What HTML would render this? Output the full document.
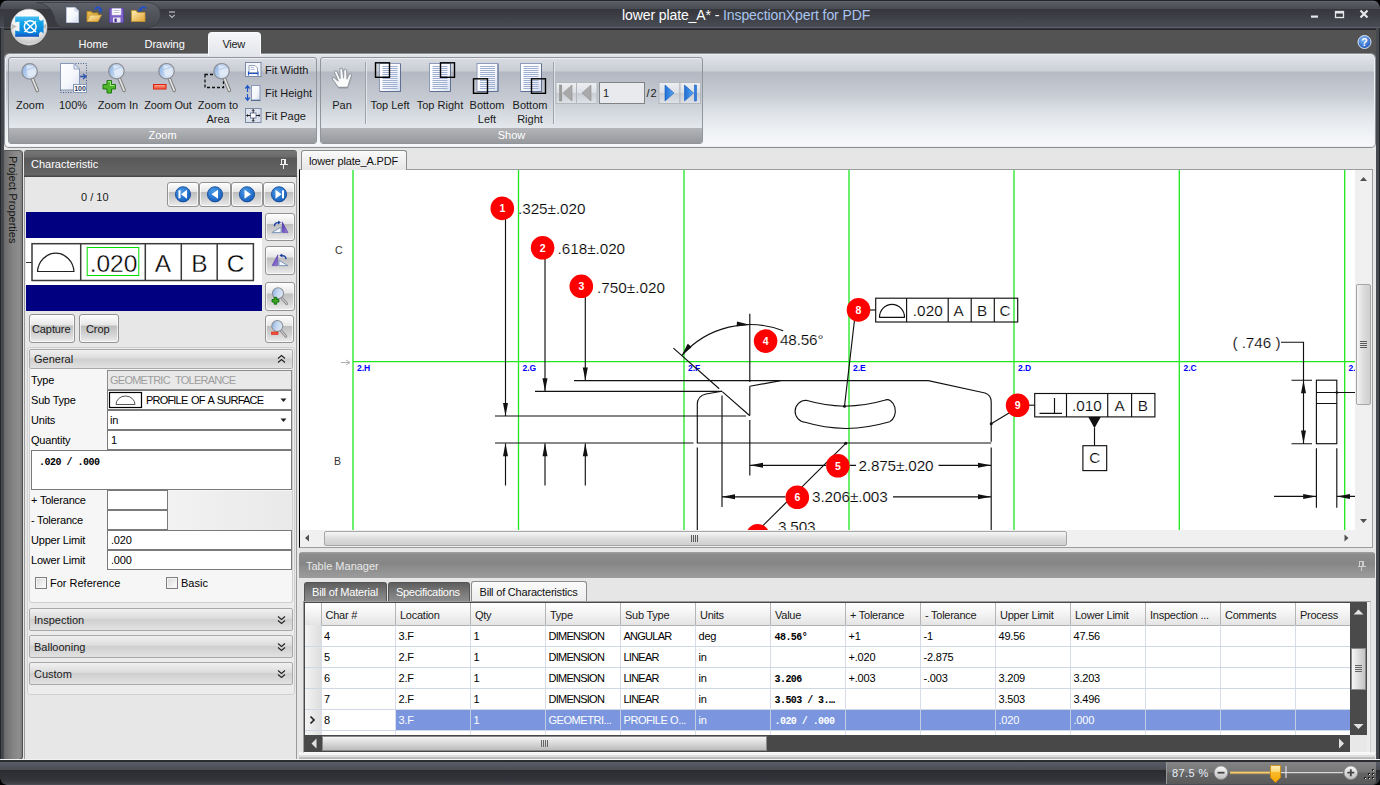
<!DOCTYPE html>
<html lang="en">
<head>
<meta charset="utf-8">
<title>lower plate_A* - InspectionXpert for PDF</title>
<style>
*{box-sizing:border-box;margin:0;padding:0}
html,body{width:1380px;height:785px;overflow:hidden;background:#535353;font-family:"Liberation Sans",sans-serif;font-size:12px;color:#000}
.a{position:absolute}
.t{position:absolute;white-space:nowrap;line-height:14px}
svg{position:absolute;overflow:visible}
/* ---------- window frame ---------- */
#win{position:absolute;left:0;top:0;width:1380px;height:785px;background:#535353;overflow:hidden}
#titlebar{left:0;top:0;width:1380px;height:30px;background:linear-gradient(#22242a 0,#22242a 1px,#6a6d76 1px,#595c65 2px,#484b52 9px,#37383d 9.500px,#3b3c42 14px,#494c54 27px,#60636c 27px,#5a5d66 28px,#34363b 28.500px,#24262b 29px,#24262b 30px)}
#lborder{left:0;top:28px;width:4px;height:757px;background:linear-gradient(90deg,#26282c 0,#26282c 1px,#43464c 1px,#484b51 4px)}
#rborder{left:1376px;top:28px;width:4px;height:757px;background:linear-gradient(90deg,#484b51 0,#43464c 3px,#26282c 3px)}
#title{left:622px;top:6px;font-size:14px;line-height:18px;color:#fff;white-space:nowrap;letter-spacing:-.1px}
#title span{color:#a9c4ee}
/* ---------- ribbon ---------- */
#ribbon{left:5px;top:54px;width:1370px;height:93px;border-radius:4px;background:linear-gradient(#e1e4e9 0,#ccd0d7 16px,#b5bac4 17px,#c9ced6 42px,#dfe3e8 58px,#eef1f4 76px,#f8f9fb 93px);border:1px solid #eceef1;box-shadow:0 0 0 1px #8b8e94}
.rgroup{top:57px;height:87px;border-radius:3px;border:1px solid #90949b;background:linear-gradient(#d9dce2 0,#c9cdd4 13px,#b3b8c2 14px,#c6cbd3 41px,#e4e8ec 70px,#e8ecef 71px);box-shadow:inset 0 1px 0 0 rgba(255,255,255,.5)}
.rglabel{left:0;right:0;bottom:0;height:15px;background:linear-gradient(#b4b5b8,#98999d);color:#fff;text-align:center;font-size:11px;line-height:14px;border-radius:0 0 2px 2px}
.rt{position:absolute;white-space:nowrap;font-size:12px;line-height:14px;color:#1a1a1a;text-align:center}
.tabtxt{position:absolute;font-size:12px;line-height:14px;color:#fff;white-space:nowrap}
/* ---------- panels ---------- */
.phead{background:linear-gradient(#4e4e4e 0,#767676 1px,#6a6a6a 7px,#585858 8px,#666 25px,#484848 26px,#484848 27px);color:#fff;font-size:12px;line-height:14px;border-radius:3px 3px 0 0}
.ghead{border:1px solid #a9a9a9;border-radius:2px;background:linear-gradient(#f1f1f1 0,#dcdcdc 45%,#cfcfcf 50%,#e2e2e2 100%)}
.lbl{position:absolute;font-size:12px;line-height:14px;white-space:nowrap;color:#000;letter-spacing:-0.2px}
.fld{position:absolute;background:#fff;border:1px solid #7a7a7a;font-size:12px;line-height:14px;white-space:nowrap;overflow:hidden;letter-spacing:-0.2px}
.btn{position:absolute;border:1px solid #929292;border-radius:3px;background:linear-gradient(#ffffff 0,#e6e6e6 38%,#bebebe 40%,#d2d2d2 70%,#ececec 100%);box-shadow:inset 0 0 0 1px rgba(255,255,255,.7)}
</style>
</head>
<body>
<div id="win">
<!-- TITLE BAR -->
<div id="titlebar" class="a"></div>
<div id="lborder" class="a"></div>
<div id="rborder" class="a"></div>
<div class="a" style="left:4px;top:100px;width:1372px;height:661px;background:#e6e6e6"></div>
<div id="title" class="a">lower plate_A* - <span>InspectionXpert for PDF</span></div>

<!-- RIBBON TABS -->
<div class="tabtxt" style="left:78.500px;top:37px;font-size:11px">Home</div>
<div class="tabtxt" style="left:144.500px;top:37px;font-size:11px">Drawing</div>

<!-- RIBBON BODY -->
<div id="ribbon" class="a"></div>
<div class="a" id="viewtab" style="left:208px;top:32px;width:53px;height:24px;border-radius:4px 4px 0 0;background:linear-gradient(#f5f6f8,#e2e5ea);border:1px solid #fafbfc;border-bottom:none"></div>
<div class="tabtxt" style="left:222.500px;top:37px;color:#1a1a1a;font-size:11px;letter-spacing:-.3px">View</div>
<div class="a rgroup" id="gzoom" style="left:8px;width:309px"><div class="a rglabel">Zoom</div></div>
<div class="a rgroup" id="gshow" style="left:320px;width:383px"><div class="a rglabel">Show</div></div>

<!-- TITLE BAR CHROME -->
<svg style="left:0;top:0" width="1380" height="56">
<defs>
 <linearGradient id="qatg" x1="0" y1="0" x2="0" y2="1"><stop offset="0" stop-color="#60636b"/><stop offset=".5" stop-color="#50535a"/><stop offset="1" stop-color="#44464c"/></linearGradient>
 <radialGradient id="orbg" cx=".5" cy=".25" r=".85"><stop offset="0" stop-color="#ffffff"/><stop offset=".55" stop-color="#f2f2f2"/><stop offset=".8" stop-color="#c9c9c9"/><stop offset="1" stop-color="#f4f4f4"/></radialGradient>
 <linearGradient id="logog" x1="0" y1="0" x2="0" y2="1"><stop offset="0" stop-color="#4cc0f2"/><stop offset=".3" stop-color="#12a4e8"/><stop offset=".8" stop-color="#0a84dc"/><stop offset="1" stop-color="#1650c0"/></linearGradient>
 <linearGradient id="fold2" x1="0" y1="0" x2="1" y2="1"><stop offset="0" stop-color="#fdf0b4"/><stop offset="1" stop-color="#e2a236"/></linearGradient>
 <radialGradient id="helpg" cx=".4" cy=".3" r=".8"><stop offset="0" stop-color="#7fb6f2"/><stop offset="1" stop-color="#1450b8"/></radialGradient>
</defs>
 <!-- left dark curve region -->
 <path d="M5,9H52" stroke="#45474e" stroke-width="0" />
 <!-- QAT pill -->
 <path d="M36,2.500H148Q160,3 160.500,15Q160,27 148,27.500H62Q56,27 54,16Q50,3.500 36,2.500Z" fill="url(#qatg)" stroke="#3a3c42" stroke-width=".8"/>
 <path d="M4,9H46Q52,11 54,16Q56,27 62,27.500H4Z" fill="#393b41"/>
 <!-- corners -->
 <path d="M0,0H7Q1,1 0,8Z" fill="#000"/><path d="M1380,0H1373Q1379,1 1380,8Z" fill="#000"/>
 <!-- orb -->
 <circle cx="29" cy="27.500" r="18.600" fill="#2a2a2a" opacity=".55"/>
 <circle cx="29" cy="27.200" r="18" fill="url(#orbg)" stroke="#d8d8d8" stroke-width=".6"/>
 <path d="M12,24l5,2.500l-5,2.500zM46,24l-5,2.500l5,2.500z" fill="#bdbdbd"/>
 <path d="M15.200,16.500H39V19.500L41,21L43.600,19.500V33.500L41,31.500L39,33.500V36.800H15.200V30.500L19.500,31.500V21.500L15.200,22.300Z" fill="url(#logog)"/>
 <circle cx="30.200" cy="26.600" r="5.900" fill="none" stroke="#fff" stroke-width="1.500"/>
 <path d="M24.500,21.200L36,32M36,21.200L24.500,32" stroke="#fff" stroke-width="1.500"/>
 <!-- new doc -->
 <path d="M66.500,7.500H75L78.500,11V22.500H66.500Z" fill="url(#pageg)" stroke="#b9c3da" stroke-width="1"/>
 <path d="M75,7.500V11H78.500Z" fill="#dfe6f3" stroke="#b9c3da" stroke-width=".6"/>
 <!-- open folder -->
 <path d="M87,21.500V11.500H91L92.500,13H98V21.500Z" fill="#e8b648" stroke="#b98a1e" stroke-width=".8"/>
 <path d="M87,21.500L90,15H101.500L98,21.500Z" fill="url(#fold2)" stroke="#c4952a" stroke-width=".8"/>
 <path d="M95,9.200C97,6.300 100.500,6.800 100.800,10.500" fill="none" stroke="#1d4fd0" stroke-width="1.800"/><path d="M98.300,9.800l2.600,3l1.600,-3.400z" fill="#1d4fd0"/>
 <!-- save -->
 <rect x="109.500" y="8.500" width="14" height="14" fill="#7b62c4" stroke="#5a44a4" stroke-width="1"/>
 <rect x="112" y="8.500" width="9" height="6.500" fill="#fff" stroke="#c8c0e8" stroke-width=".6"/>
 <path d="M113.500,10.500h6M113.500,12.500h6" stroke="#b0b0c8" stroke-width=".8"/>
 <rect x="113" y="17.500" width="7.500" height="5" fill="#e8e6f4"/><rect x="114.500" y="18.500" width="2.200" height="3.500" fill="#3c2c84"/>
 <!-- folder with arrow -->
 <path d="M131.500,21.500V10.500H136L137.500,12.500H145V21.500Z" fill="url(#fold2)" stroke="#c4952a" stroke-width=".8"/>
 <path d="M140.300,10.500C140.500,7 144,6.300 146,8.500" fill="none" stroke="#1d4fd0" stroke-width="1.800"/><path d="M142.300,9.500l-3.200,2.800l-.6,-3.800z" fill="#1d4fd0"/>
 <!-- qat dropdown -->
 <path d="M169,12h6" stroke="#9c9ea3" stroke-width="1.600"/><path d="M169.300,14.800l2.700,2.700l2.700,-2.700" fill="none" stroke="#b8babf" stroke-width="1.100"/>
 <!-- window controls -->
 <rect x="1311" y="15.500" width="7" height="2.200" fill="#e4e6ea"/>
 <rect x="1335.500" y="11.500" width="8" height="6" fill="none" stroke="#e4e6ea" stroke-width="1.300"/><rect x="1335" y="11" width="9" height="2.500" fill="#e4e6ea"/>
 <path d="M1360.500,10.500L1367.500,17.500M1367.500,10.500L1360.500,17.500" stroke="#e4e6ea" stroke-width="2.200"/>
 <!-- help -->
 <circle cx="1364.500" cy="42" r="6.500" fill="url(#helpg)" stroke="#dfe8f6" stroke-width="1"/>
 <text x="1364.500" y="46" font-family="Liberation Sans, sans-serif" font-size="10.500" font-weight="bold" fill="#fff" text-anchor="middle">?</text>
</svg>
<!-- RIBBON CONTENT -->
<svg width="0" height="0" style="left:0;top:0">
<defs>
<linearGradient id="lensg" x1="0" y1="0.3" x2="1" y2="0.6"><stop offset="0" stop-color="#8db2e6"/><stop offset="0.45" stop-color="#c2d6ef"/><stop offset="1" stop-color="#e0e9f5"/></linearGradient>
<linearGradient id="pageg" x1="0" y1="0" x2="1" y2="1"><stop offset="0" stop-color="#ffffff"/><stop offset="0.6" stop-color="#f4f6fb"/><stop offset="1" stop-color="#d4dcee"/></linearGradient>
<linearGradient id="foldg" x1="0" y1="0" x2="0" y2="1"><stop offset="0" stop-color="#fbe9a8"/><stop offset="1" stop-color="#e0a83c"/></linearGradient>
<linearGradient id="navg" x1="0" y1="0" x2="0" y2="1"><stop offset="0" stop-color="#eef0f3"/><stop offset="0.48" stop-color="#dcdfe4"/><stop offset="0.52" stop-color="#c9cdd4"/><stop offset="1" stop-color="#dfe2e7"/></linearGradient>
<linearGradient id="blueg" x1="0" y1="0" x2="1" y2="0"><stop offset="0" stop-color="#1f6fd6"/><stop offset="1" stop-color="#5aa6f0"/></linearGradient>
<g id="mag">
  <line x1="3.100" y1="8" x2="7.700" y2="19.100" stroke="#7a7a7a" stroke-width="3.600" stroke-linecap="round"/>
  <line x1="3.100" y1="8" x2="7.700" y2="19.100" stroke="#e2e2e2" stroke-width="1.700" stroke-linecap="round"/>
  <circle cx="0" cy="0" r="7.700" fill="url(#lensg)" stroke="#8a8c90" stroke-width="1.200"/>
  <path d="M-3.100,-6.500L4.800,-3.600L5.300,2.700L-1,6L-2.700,.2Z" fill="#e6eef8" opacity=".75"/>
  <path d="M-3.400,-1.200L5.800,-4.600" stroke="#b4cdee" stroke-width="1.300" opacity=".9"/>
</g>
<g id="docpage">
  <rect x="0.5" y="0.5" width="21" height="28" fill="url(#pageg)" stroke="#8c9bb8" stroke-width="1"/>
  <path d="M21.500,1V28.500H1" fill="none" stroke="#5f7092" stroke-width="1"/>
  <path d="M3.5,3.5h15M3.5,5.5h15M3.5,7.5h15M3.5,9.5h15M3.5,11.5h15M3.5,13.5h15M3.5,15.5h15M3.5,17.5h15M3.5,19.5h15M3.5,21.5h15M3.5,23.5h15M3.5,25.5h15" stroke="#9fb0d2" stroke-width="1"/>
</g>
</defs>
</svg>

<!-- Zoom -->
<svg style="left:0;top:0" width="720" height="150">
  <use href="#mag" x="29.6" y="71.4"/>
  <!-- 100% icon -->
  <rect x="60.5" y="63.5" width="26" height="29" fill="none" stroke="#4a5f8f" stroke-width="1" stroke-dasharray="1 1.5"/>
  <path d="M60.5,63.5H74L79.5,69V90H60.5Z" fill="url(#pageg)" stroke="#8898b8" stroke-width="1"/>
  <path d="M74,63.5V69H79.5Z" fill="#dfe6f3" stroke="#8898b8" stroke-width=".8"/>
  <path d="M80,76.5H85M83,74l3,2.5l-3,2.5" fill="none" stroke="#2d55b0" stroke-width="1.3"/>
  <rect x="73.5" y="84.5" width="13" height="8" fill="#fff" stroke="#8898b8" stroke-width="1"/>
  <text x="80" y="91.3" font-family="Liberation Sans, sans-serif" font-size="7" font-weight="bold" fill="#2b3a66" text-anchor="middle">100</text>
  <!-- zoom in -->
  <use href="#mag" x="116.4" y="71.2"/>
  <path d="M107,80.5h4.5v4h4v4.5h-4v4h-4.5v-4h-4v-4.5h4z" fill="#4fb82a" stroke="#1f7a10" stroke-width="1"/>
  <path d="M108,81.5h2.5v4h4" fill="none" stroke="#a6e48a" stroke-width="1"/>
  <!-- zoom out -->
  <use href="#mag" x="166.5" y="71.2"/>
  <rect x="153.5" y="84.5" width="12.5" height="4.5" fill="#f26a4e" stroke="#e0200c" stroke-width="1"/>
  <path d="M154.5,85.8h10.5" stroke="#fab0a0" stroke-width="1"/>
  <!-- zoom to area -->
  <rect x="205" y="74.5" width="18.5" height="13" fill="none" stroke="#111" stroke-width="1.3" stroke-dasharray="3 2"/>
  <use href="#mag" x="221.6" y="71.2"/>
  <!-- fit width -->
  <rect x="245.5" y="62.5" width="15.5" height="14" fill="#f2f5fa" stroke="#7d8aa6" stroke-width="1"/>
  <path d="M249,65.5h6l2.5,2.5v4.5h-8.5z" fill="#fff" stroke="#7d8aa6" stroke-width=".8"/>
  <path d="M248.5,73.5h9.5M248.5,71.5v4M258,71.5v4" stroke="#1f55c8" stroke-width="1.1" fill="none"/>
  <path d="M250.5,67.5h3.5M250.5,69.5h4.5" stroke="#9fb0d2" stroke-width=".8"/>
  <!-- fit height -->
  <rect x="251.5" y="85.5" width="8.5" height="14.5" fill="url(#pageg)" stroke="#8898b8" stroke-width="1"/>
  <path d="M251,100.5h9.5" stroke="#5a6a8c" stroke-width="1"/>
  <path d="M247.5,86v6M245.3,88.5l2.2,-2.7l2.2,2.7M247.5,94v6M245.3,97.5l2.2,2.7l2.2,-2.7" fill="none" stroke="#1f55c8" stroke-width="1.2"/>
  <!-- fit page -->
  <rect x="245.5" y="108.5" width="15.5" height="14" fill="#dde3ee" stroke="#7d8aa6" stroke-width="1"/>
  <rect x="250.5" y="113" width="5.5" height="5" fill="#fff" stroke="#5a6a8c" stroke-width=".8"/>
  <path d="M253.2,109.5v3.5M253.2,118v3.5M246.5,115.5h4M256,115.5h4" stroke="#222" stroke-width="1"/>
  <path d="M252,110.8l1.2,-1.3l1.2,1.3M252,120.2l1.2,1.3l1.2,-1.3M247.8,114.3l-1.3,1.2l1.3,1.2M258.7,114.3l1.3,1.2l-1.3,1.2" fill="none" stroke="#222" stroke-width=".9"/>

  <!-- Pan hand -->
  <g>
    <path d="M338.700,88.200L348.200,88.200L352,76.800Q352.500,74.300 350.800,74.600Q349.300,74.800 348,78.300L347.500,79.800L347.100,71.300Q346.700,69.600 345.500,69.800Q344.300,70 344.300,71.600L344.100,78.800L343.100,70.300Q342.700,68.800 341.500,69Q340.100,69.300 340.300,70.800L340.700,79.300L337.500,72.300Q336.500,71 335.500,71.800Q334.500,72.600 335.300,74.100L338.700,81.800L335,78.600Q333.700,77.800 333,78.800Q332.500,79.800 333.500,80.800Z" fill="#7c8088" opacity=".35"/>
    <path d="M338.200,87.300L347.600,87.300L351.300,76Q352,73.500 350.300,73.800Q348.800,74 347.500,77.500L347,79L346.600,70.500Q346.200,68.800 345,69Q343.800,69.200 343.800,70.800L343.600,78L342.600,69.500Q342.200,68 341,68.200Q339.600,68.500 339.800,70L340.200,78.500L337,71.500Q336,70.200 335,71Q334,71.800 334.800,73.300L338.200,81L334.500,77.800Q333.200,77 332.500,78Q332,79 333,80Z" fill="#fbfbfb" stroke="#989ca4" stroke-width="1.100" stroke-linejoin="round"/>
    <path d="M338.500,87.800H347.500" stroke="#8a8e96" stroke-width="1"/>
  </g>
  <!-- separators -->
  <path d="M365.5,62V124M553.5,62V124" stroke="#9ea3ab" stroke-width="1"/>
  <path d="M366.5,62V124M554.5,62V124" stroke="#eef0f3" stroke-width="1" opacity=".7"/>
  <!-- Top Left etc -->
  <use href="#docpage" x="379" y="63"/>
  <rect x="375.5" y="62.8" width="14" height="14.5" fill="none" stroke="#000" stroke-width="1.4"/>
  <use href="#docpage" x="429" y="63"/>
  <rect x="440.5" y="62.8" width="14" height="14.5" fill="none" stroke="#000" stroke-width="1.4"/>
  <use href="#docpage" x="476.5" y="63"/>
  <rect x="473.5" y="78.8" width="14" height="14.5" fill="none" stroke="#000" stroke-width="1.4"/>
  <use href="#docpage" x="520" y="63"/>
  <rect x="531.5" y="78.8" width="14" height="14.5" fill="none" stroke="#000" stroke-width="1.4"/>
  <!-- page nav -->
  <rect x="556" y="82.500" width="20.500" height="21" fill="url(#navg)" stroke="#b3b7be" stroke-width="1"/>
  <rect x="576.5" y="82.500" width="20.500" height="21" fill="url(#navg)" stroke="#b3b7be" stroke-width="1"/>
  <rect x="559.5" y="85" width="2.300" height="16" fill="#9b9b9b" stroke="#8a8a8a" stroke-width=".5"/>
  <path d="M572,85V101L563,93Z" fill="#a9a9a9" stroke="#909090" stroke-width=".6"/>
  <path d="M591,85V101L582,93Z" fill="#a9a9a9" stroke="#909090" stroke-width=".6"/>
  <rect x="599.5" y="82.500" width="45" height="21" fill="#e8eaee" stroke="#808286" stroke-width="1"/>
  <rect x="659" y="82.500" width="21" height="21" fill="url(#navg)" stroke="#b3b7be" stroke-width="1"/>
  <rect x="680" y="82.500" width="20.500" height="21" fill="url(#navg)" stroke="#b3b7be" stroke-width="1"/>
  <path d="M665,85V101L674,93Z" fill="url(#blueg)" stroke="#1a5fc0" stroke-width=".6"/>
  <path d="M684.5,85V101L693.500,93Z" fill="url(#blueg)" stroke="#1a5fc0" stroke-width=".6"/>
  <rect x="694.3" y="85" width="2.300" height="16" fill="#2f7fe0" stroke="#1a5fc0" stroke-width=".5"/>
</svg>
<div class="rt" style="left:0;width:60px;top:98px;font-size:11px">Zoom</div>
<div class="rt" style="left:43px;width:60px;top:98px;font-size:11px">100%</div>
<div class="rt" style="left:88px;width:60px;top:98px;font-size:11px">Zoom In</div>
<div class="rt" style="left:138px;width:60px;top:98px;font-size:11px;letter-spacing:-.2px">Zoom Out</div>
<div class="rt" style="left:188px;width:60px;top:98px;font-size:11px">Zoom to<br>Area</div>
<div class="rt" style="left:265px;top:63px;font-size:11px;text-align:left">Fit Width</div>
<div class="rt" style="left:265px;top:86px;font-size:11px;text-align:left">Fit Height</div>
<div class="rt" style="left:265px;top:109px;font-size:11px;text-align:left">Fit Page</div>
<div class="rt" style="left:312px;width:60px;top:98px;font-size:11px">Pan</div>
<div class="rt" style="left:360px;width:60px;top:98px;font-size:11px">Top Left</div>
<div class="rt" style="left:410px;width:60px;top:98px;font-size:11px">Top Right</div>
<div class="rt" style="left:457px;width:60px;top:98px;font-size:11px">Bottom<br>Left</div>
<div class="rt" style="left:500px;width:60px;top:98px;font-size:11px">Bottom<br>Right</div>
<div class="rt" style="left:603px;top:86px;font-size:11px;text-align:left">1</div>
<div class="rt" style="left:646.500px;top:86px;font-size:11px;text-align:left;letter-spacing:1px">/2</div>
<!-- LEFT: Project Properties vertical tab -->
<div class="a" style="left:4px;top:150px;width:19px;height:610px;border-radius:0 4px 4px 0;border-right:1px solid #4c4c4c;border-bottom:1px solid #4c4c4c;background:linear-gradient(90deg,#6a6a6a 0,#848484 50%,#8e8e8e 85%,#7e7e7e 100%);border-top:1px solid #5a5a5a"></div>
<div class="t" style="left:20px;top:156px;font-size:11px;line-height:14px;color:#161616;transform-origin:0 0;transform:rotate(90deg);letter-spacing:0">Project Properties</div>

<!-- Characteristic panel -->
<div class="a" style="left:24px;top:151px;width:273px;height:609px;background:#e7e7e7;border-radius:3px 3px 0 0;border:1px solid #9a9a9a"></div>
<div class="a phead" style="left:24px;top:150px;width:273px;height:27px"></div>
<div class="t" style="left:31px;top:157px;font-size:11px;color:#fff">Characteristic</div>
<svg style="left:279px;top:158px" width="10" height="12" shape-rendering="crispEdges"><path d="M2.500,1.500h4v5h-4zM1,6.500h8M4.500,7v4" stroke="#f0f0f0" stroke-width="1" fill="none"/><path d="M5.500,2v4" stroke="#f0f0f0" stroke-width="1"/></svg>

<div class="t" style="left:81px;top:190px;font-size:11px;color:#1a1a1a">0 / 10</div>

<!-- nav buttons -->
<div class="btn" style="left:167px;top:182px;width:32px;height:25px"></div>
<div class="btn" style="left:199px;top:182px;width:32px;height:25px"></div>
<div class="btn" style="left:231px;top:182px;width:32px;height:25px"></div>
<div class="btn" style="left:263px;top:182px;width:32px;height:25px"></div>
<svg style="left:168px;top:182px" width="130" height="26">
 <defs><radialGradient id="bb" cx=".4" cy=".3" r=".8"><stop offset="0" stop-color="#4b9be8"/><stop offset="1" stop-color="#0f57b8"/></radialGradient></defs>
 <g stroke="#0a4392" stroke-width=".8" fill="url(#bb)"><circle cx="15" cy="12.3" r="7.6"/><circle cx="47" cy="12.3" r="7.6"/><circle cx="79" cy="12.3" r="7.6"/><circle cx="111" cy="12.3" r="7.6"/></g>
 <g fill="#fff"><rect x="10.5" y="8.3" width="2" height="8"/><path d="M19,7.8v9l-6,-4.5z"/><path d="M50,7.800v9l-6.500,-4.500z"/><path d="M76.500,7.800v9l6.500,-4.500z"/><path d="M107.500,7.800v9l6,-4.500z"/><rect x="114" y="8.3" width="2" height="8"/></g>
</svg>

<!-- image area -->
<div class="a" style="left:26px;top:212px;width:236px;height:99px;background:#000080"></div>
<div class="a" style="left:26px;top:238px;width:236px;height:47px;background:#fff"></div>
<svg style="left:26px;top:238px" width="236" height="47">
 <path d="M0,24.500H6" stroke="#333" stroke-width="1"/>
 <rect x="6" y="5.700" width="221.400" height="36.800" fill="#fff" stroke="#3a3a3a" stroke-width="1.500"/>
 <path d="M54.700,5.700V42.500M119.300,5.700V42.500M155.300,5.700V42.500M191.200,5.700V42.500" stroke="#3a3a3a" stroke-width="1.500"/>
 <path d="M11.500,33.500A18.300,19.800 0 0 1 48,33.500Z" fill="none" stroke="#222" stroke-width="1.200" stroke-linejoin="round"/>
 <rect x="61.200" y="9.500" width="51.600" height="28" fill="none" stroke="#00e000" stroke-width="1"/>
 <g font-family="Liberation Sans, sans-serif" font-size="24.500" fill="#000" text-anchor="middle" stroke="#fff" stroke-width=".35">
  <text x="87.500" y="34">.020</text><text x="137" y="34">A</text><text x="173.300" y="34">B</text><text x="209.500" y="34">C</text>
 </g>
</svg>
<!-- side buttons -->
<div class="btn" style="left:265px;top:213px;width:30px;height:28px"></div>
<div class="btn" style="left:265px;top:246px;width:30px;height:29px"></div>
<div class="btn" style="left:265px;top:282px;width:30px;height:29px"></div>
<div class="btn" style="left:265px;top:315px;width:29px;height:28px"></div>
<svg style="left:265px;top:213px" width="30" height="132">
 <!-- rotate icons -->
 <defs><linearGradient id="purg" x1="0" y1="0" x2="1" y2="1"><stop offset="0" stop-color="#4a2fa8"/><stop offset="1" stop-color="#9a84d8"/></linearGradient></defs>
 <path d="M6.900,19.600H16V14.100Z" fill="#f2f6fc" stroke="#6f8db4" stroke-width=".9"/>
 <path d="M17.200,8.800V19.600H23Z" fill="url(#purg)" stroke="#4a2fa8" stroke-width=".5"/>
 <path d="M9.400,13.200C9.400,10.300 11.800,9.300 14,9.700" fill="none" stroke="#1a3fa0" stroke-width="1.400"/><path d="M13.200,7.600l2.800,2l-3,1.800z" fill="#1a3fa0"/>
 <path d="M7.100,52.600H12.800V41.800Z" fill="url(#purg)" stroke="#4a2fa8" stroke-width=".5"/>
 <path d="M14,47.300V52.600H22.900Z" fill="#f2f6fc" stroke="#6f8db4" stroke-width=".9"/>
 <path d="M21,46.200C21,43.300 18.600,42.300 16.400,42.700" fill="none" stroke="#1a3fa0" stroke-width="1.400"/><path d="M17.200,40.600l-2.800,2l3,1.800z" fill="#1a3fa0"/>
 <!-- small magnifiers -->
 <g transform="translate(13,80.200) scale(.72)"><line x1="4" y1="5" x2="12" y2="14.500" stroke="#808080" stroke-width="3.600" stroke-linecap="round"/><line x1="4" y1="5" x2="12" y2="14.500" stroke="#d0d0d0" stroke-width="1.500" stroke-linecap="round"/><circle r="7.700" fill="url(#lensg)" stroke="#8a8d92" stroke-width="1.400"/></g>
 <path d="M7,86.500h2.200v-2.200h2.500v2.200h2.200v2.500h-2.200v2.200h-2.500v-2.200h-2.200z" fill="#3aa81c" stroke="#0c6a0c" stroke-width=".9"/>
 <g transform="translate(12.300,113) scale(.72)"><line x1="4" y1="5" x2="12" y2="14.500" stroke="#808080" stroke-width="3.600" stroke-linecap="round"/><line x1="4" y1="5" x2="12" y2="14.500" stroke="#d0d0d0" stroke-width="1.500" stroke-linecap="round"/><circle r="7.700" fill="url(#lensg)" stroke="#8a8d92" stroke-width="1.400"/></g>
 <rect x="6.500" y="119" width="6.500" height="2.500" fill="#f0523a" stroke="#d81c0c" stroke-width=".6"/>
</svg>

<!-- capture / crop -->
<div class="btn" style="left:29px;top:314px;width:46px;height:29px"></div>
<div class="btn" style="left:79px;top:314px;width:40px;height:29px"></div>
<div class="t" style="left:32px;top:322px;font-size:11px;color:#1a1a1a;letter-spacing:-.1px">Capture</div>
<div class="t" style="left:86px;top:322px;font-size:11px;color:#1a1a1a;letter-spacing:-.1px">Crop</div>

<!-- group container -->
<div class="a" style="left:27px;top:347px;width:268px;height:348px;border:1px solid #d0d0d0;border-radius:3px;background:#ececec"></div>
<!-- General -->
<div class="a" style="left:29px;top:369px;width:264px;height:234px;background:#f6f6f6;border:1px solid #cfcfcf;border-top:none;border-radius:0 0 3px 3px"></div>
<div class="a ghead" style="left:29px;top:349px;width:264px;height:20px"></div>
<div class="t" style="left:34px;top:352px;font-size:11px;color:#1a1a1a">General</div>
<svg style="left:277px;top:354px" width="9" height="10"><path d="M1,4.500l3.500,-3l3.500,3M1,8.500l3.500,-3l3.500,3" fill="none" stroke="#222" stroke-width="1.100"/></svg>

<div class="lbl" style="left:31px;top:373px;font-size:11px">Type</div>
<div class="lbl" style="left:31px;top:393px;font-size:11px">Sub Type</div>
<div class="lbl" style="left:31px;top:413px;font-size:11px">Units</div>
<div class="lbl" style="left:31px;top:433px;font-size:11px">Quantity</div>
<div class="lbl" style="left:31px;top:493px;font-size:11px">+ Tolerance</div>
<div class="lbl" style="left:31px;top:513px;font-size:11px">- Tolerance</div>
<div class="lbl" style="left:31px;top:533px;font-size:11px">Upper Limit</div>
<div class="lbl" style="left:31px;top:553px;font-size:11px">Lower Limit</div>

<div class="fld" style="left:107px;top:370px;width:185px;height:20px;background:#e9e9e9;color:#9d9d9d;font-size:11px;padding:2px 0 0 2px;letter-spacing:-.75px;word-spacing:3px;border-color:#8c8c8c">GEOMETRIC  TOLERANCE</div>
<div class="fld" style="left:107px;top:390px;width:185px;height:20px;font-size:11px;padding:2px 0 0 38px;letter-spacing:-.8px;word-spacing:1.200px">PROFILE OF A SURFACE</div>
<svg style="left:109px;top:392px" width="34" height="17"><rect x=".5" y=".5" width="32" height="15" fill="#fff" stroke="#000" stroke-width="1.200"/><path d="M7,12.500A9.500,8.500 0 0 1 26,12.500Z" fill="none" stroke="#555" stroke-width="1"/></svg>
<svg style="left:280px;top:398px" width="8" height="5"><path d="M0.500,0.500h6l-3,3.500z" fill="#222"/></svg>
<div class="fld" style="left:107px;top:410px;width:185px;height:20px;font-size:11px;padding:2px 0 0 2px">in</div>
<svg style="left:280px;top:418px" width="8" height="5"><path d="M0.500,0.500h6l-3,3.500z" fill="#222"/></svg>
<div class="fld" style="left:107px;top:430px;width:185px;height:20px;font-size:11px;padding:2px 0 0 3px">1</div>
<div class="fld" style="left:31px;top:450px;width:261px;height:40px;font-family:'Liberation Mono',monospace;font-weight:bold;font-size:10px;padding:5px 0 0 7px;letter-spacing:-.5px">.020 / .000</div>
<div class="fld" style="left:107px;top:490px;width:61px;height:20px"></div>
<div class="fld" style="left:107px;top:510px;width:61px;height:20px"></div>
<div class="a" style="left:168px;top:491px;width:124px;height:39px;background:linear-gradient(90deg,#f2f2f2,#e9e9e9)"></div>
<div class="fld" style="left:107px;top:530px;width:185px;height:20px;font-size:11px;padding:2px 0 0 3px">.020</div>
<div class="fld" style="left:107px;top:550px;width:185px;height:20px;font-size:11px;padding:2px 0 0 3px">.000</div>

<div class="a" style="left:35px;top:577px;width:12px;height:12px;border:1px solid #7f7f7f;background:linear-gradient(135deg,#d8d8d8,#fff);box-shadow:inset 0 0 0 1px #f4f4f4"></div>
<div class="lbl" style="left:50px;top:576px;font-size:11px;letter-spacing:0">For Reference</div>
<div class="a" style="left:166px;top:577px;width:12px;height:12px;border:1px solid #7f7f7f;background:linear-gradient(135deg,#d8d8d8,#fff);box-shadow:inset 0 0 0 1px #f4f4f4"></div>
<div class="lbl" style="left:181px;top:576px;font-size:11px;letter-spacing:0">Basic</div>

<!-- collapsed groups -->
<div class="a ghead" style="left:29px;top:608px;width:264px;height:23px"></div>
<div class="a ghead" style="left:29px;top:635px;width:264px;height:23px"></div>
<div class="a ghead" style="left:29px;top:662px;width:264px;height:23px"></div>
<div class="t" style="left:34px;top:613px;font-size:11px;color:#1a1a1a">Inspection</div>
<div class="t" style="left:34px;top:640px;font-size:11px;color:#1a1a1a">Ballooning</div>
<div class="t" style="left:34px;top:667px;font-size:11px;color:#1a1a1a">Custom</div>
<svg style="left:277px;top:615px" width="9" height="10"><path d="M1,1.500l3.500,3l3.500,-3M1,5.500l3.500,3l3.500,-3" fill="none" stroke="#222" stroke-width="1.100"/></svg>
<svg style="left:277px;top:642px" width="9" height="10"><path d="M1,1.500l3.500,3l3.500,-3M1,5.500l3.500,3l3.500,-3" fill="none" stroke="#222" stroke-width="1.100"/></svg>
<svg style="left:277px;top:669px" width="9" height="10"><path d="M1,1.500l3.500,3l3.500,-3M1,5.500l3.500,3l3.500,-3" fill="none" stroke="#222" stroke-width="1.100"/></svg>
<!-- DOC AREA -->
<div class="a" style="left:299px;top:169px;width:1074px;height:379px;background:#f0f0f0;border:1px solid #9c9c9c;border-left-color:#000"></div>
<!-- doc tab -->
<div class="a" style="left:301px;top:150px;width:106px;height:20px;border:1px solid #8c8c8c;border-bottom:none;border-radius:3px 3px 0 0;background:linear-gradient(#fafafa,#e6e6e6)"></div>
<div class="t" style="left:309px;top:154px;font-size:11px;color:#111;letter-spacing:-.15px">lower plate_A.PDF</div>
<!-- page -->
<div class="a" style="left:300px;top:170px;width:1055px;height:360px;background:#fff"></div>
<svg style="left:300px;top:170px;overflow:hidden" width="1055" height="360" viewBox="300 170 1055 360">
<defs>
 <path id="ahd" d="M0,0l-2.500,-13h5z"/>
</defs>
<!-- green grid -->
<g stroke="#1fe81f" stroke-width="1.300" fill="none">
 <path d="M353,170V530M518.500,170V530M684,170V530M849,170V530M1014,170V530M1179.300,170V530M1344.700,170V530"/>
 <path d="M353,361.700H1355"/>
</g>
<path d="M341,362.500h8M346,360l4,2.500l-4,2.500" stroke="#b0b0b0" stroke-width="1" fill="none"/>
<g font-family="Liberation Sans, sans-serif" font-size="8.500" font-weight="bold" fill="#0000ff">
 <text x="357" y="371">2.H</text><text x="522.500" y="371">2.G</text><text x="688" y="371">2.F</text><text x="853" y="371">2.E</text><text x="1018" y="371">2.D</text><text x="1183.500" y="371">2.C</text><text x="1348.500" y="371">2.B</text>
</g>
<g font-family="Liberation Sans, sans-serif" font-size="10.500" fill="#333">
 <text x="335" y="253.500">C</text><text x="334" y="465">B</text>
</g>
<!-- geometry lines -->
<g stroke="#111" stroke-width="1.150" fill="none" stroke-linecap="butt">
 <!-- vertical dim lines 1 2 3 -->
 <path d="M505.500,215V416M545,255V391M585.300,295V380.500"/>
 <path d="M505.500,443.500V485.500M545,443.500V485.500M585.300,443.500V485.500"/>
 <!-- extension lines -->
 <path d="M574,380.600H780.700M535,391.400H722M495,416H746M495,443H693.500"/>
 <!-- part outline -->
 <path d="M749.800,386.300L780.700,380.600H928.300L985,393Q991.200,395 991.200,402V441.700"/>
 <path d="M722,391.300L706,394Q697.300,396 697.300,404.500V443H991.200"/>
 <path d="M697.300,447.500V530M991.200,447.500V530"/>
 <path d="M722,395.500V507M749.800,313.800V382M749.800,386.300V415.600M749.800,420V475.500"/>
 <!-- diagonal -->
 <path d="M673.400,348.100L719.200,388.800M722.300,391.600L749.800,415.800"/>
 <!-- angle arc -->
 <path d="M682,355.300A91,91 0 0 1 783.200,330.800"/>
 <!-- slot -->
 <path d="M806.100,400.300Q825,405.800 844.500,406.200Q866,405.800 884.500,400.300A8,11 0 0 1 889.700,421.700Q868,428 846,428.500Q824,428 805.200,422.300A11.020,11.020 0 0 1 806.100,400.300Z"/>
 <!-- dim lines 5,6 -->
 <path d="M750,465.300H826M850,465.300H856M938.500,465.300H991M722,496.800H785.500M893,496.800H991"/>
 <!-- leaders -->
 <path d="M845.800,443.400L758,530.500M854.500,320L844.500,406.200M1009,413L991.200,423.800"/>
 <!-- FCF 8 -->
 <path d="M869,310H875.700"/>
 <rect x="875.700" y="298.200" width="142" height="23.800"/>
 <path d="M906.600,298.200V322M948.200,298.200V322M971.200,298.200V322M994.300,298.200V322"/>
 <path d="M879.500,317.300A12.500,13 0 0 1 904.500,317.300Z" stroke-linejoin="round"/>
 <!-- FCF 9 -->
 <path d="M1028,405.200H1034.700"/>
 <rect x="1034.700" y="393.500" width="120.200" height="23.400"/>
 <path d="M1066.500,393.500V416.900M1107.700,393.500V416.900M1131.600,393.500V416.900"/>
 <path d="M1039.500,413.300H1062M1054.500,398V413.300"/>
 <path d="M1094.500,428V445.700"/>
 <rect x="1082.900" y="445.700" width="23.800" height="24.900"/>
 <!-- .746 -->
 <path d="M1281,342.200H1303.500V443.500M1291.500,380.200H1312M1291.500,443.700H1312"/>
 <rect x="1316.400" y="380.200" width="20.400" height="63.500"/>
 <path d="M1316.400,392.500H1336.800M1316.400,403.500H1336.800M1336.800,392.500H1355"/>
 <path d="M1316.400,448.200V507.800M1336.800,448.200V507.800M1274,496.400H1316M1337,496.400H1355"/>
</g>
<!-- dots -->
<g fill="#111"><circle cx="844.500" cy="406.200" r="1.500"/><circle cx="845.800" cy="443.300" r="1.500"/><circle cx="991.200" cy="423.800" r="1.500"/><circle cx="1336.800" cy="392.500" r="1.300"/></g>
<!-- arrowheads -->
<g fill="#111">
 <use href="#ahd" transform="translate(505.500,416)"/>
 <use href="#ahd" transform="translate(545,391.300)"/>
 <use href="#ahd" transform="translate(585.300,380.500)"/>
 <use href="#ahd" transform="translate(505.500,443.300) rotate(180)"/>
 <use href="#ahd" transform="translate(545,443.300) rotate(180)"/>
 <use href="#ahd" transform="translate(585.300,443.300) rotate(180)"/>
 <use href="#ahd" transform="translate(750,465.300) rotate(90)"/>
 <use href="#ahd" transform="translate(991,465.300) rotate(-90)"/>
 <use href="#ahd" transform="translate(722,496.800) rotate(90)"/>
 <use href="#ahd" transform="translate(991,496.800) rotate(-90)"/>
 <use href="#ahd" transform="translate(749.800,324.800) rotate(-87)"/>
 <use href="#ahd" transform="translate(681.700,355.600) rotate(38)"/>
 <use href="#ahd" transform="translate(1303.500,380.300) rotate(180)"/>
 <use href="#ahd" transform="translate(1303.500,443.500)"/>
 <use href="#ahd" transform="translate(1316.200,496.400) rotate(-90)"/>
 <use href="#ahd" transform="translate(1337,496.400) rotate(90)"/>
 <path d="M1088.300,417H1100.700L1094.500,428.300Z"/>
</g>
<!-- dimension texts -->
<g font-family="Liberation Sans, sans-serif" font-size="15.300" fill="#000" stroke="#fff" stroke-width=".18">
 <text x="518" y="214.3" textLength="67.500">.325±.020</text>
 <text x="557.600" y="253.7" textLength="67.500">.618±.020</text>
 <text x="597" y="293.3" textLength="68">.750±.020</text>
 <text x="780" y="345.1" textLength="43.500">48.56°</text>
 <text x="858.500" y="471" textLength="75">2.875±.020</text>
 <text x="812" y="502.200" textLength="75.800">3.206±.003</text>
 <text x="778" y="532" textLength="37.500">3.503</text>
 <text x="912.800" y="315.5" textLength="30">.020</text>
 <text x="953.500" y="315.5">A</text><text x="977" y="315.5">B</text><text x="999.500" y="315.5">C</text>
 <text x="1072" y="410.8" textLength="29.700">.010</text>
 <text x="1114.400" y="410.8">A</text><text x="1137.800" y="410.8">B</text>
 <text x="1089.200" y="463.3">C</text>
 <text x="1232.400" y="347.8" textLength="48.200">( .746 )</text>
</g>
<!-- balloons -->
<g fill="#ff0000">
 <circle cx="502.300" cy="208.400" r="11.800"/><circle cx="542.600" cy="247.800" r="11.800"/><circle cx="581.300" cy="286.300" r="11.800"/>
 <circle cx="765.600" cy="341.100" r="11.800"/><circle cx="837.900" cy="465.800" r="11.800"/><circle cx="797.300" cy="497.300" r="11.800"/>
 <circle cx="757.800" cy="535.800" r="11.800"/><circle cx="858.500" cy="309.900" r="11.800"/><circle cx="1017.600" cy="405.300" r="11.800"/>
</g>
<g font-family="Liberation Sans, sans-serif" font-size="10.500" font-weight="bold" fill="#fff" text-anchor="middle">
 <text x="502.300" y="212.200">1</text><text x="542.600" y="251.600">2</text><text x="581.300" y="290.100">3</text>
 <text x="765.600" y="344.900">4</text><text x="837.900" y="469.600">5</text><text x="797.300" y="501.100">6</text>
 <text x="757.800" y="539.600">7</text><text x="858.500" y="313.700">8</text><text x="1017.600" y="409.100">9</text>
</g>
</svg>

<!-- vertical scrollbar -->
<div class="a" style="left:1355px;top:170px;width:17px;height:360px;background:#f0f0f0"></div>
<div class="a" style="left:1356px;top:284px;width:15px;height:121px;border:1px solid #a6a6a6;border-radius:2px;background:linear-gradient(90deg,#f4f4f4,#dcdcdc 50%,#cfcfcf)"></div>
<svg style="left:1355px;top:170px" width="17" height="360"><path d="M5,11l3.500,-4l3.500,4zM5,349l3.500,4l3.500,-4z" fill="#505050"/><path d="M5,171.500h7M5,173.500h7M5,175.500h7M5,177.500h7" stroke="#5a5a5a" stroke-width="1" shape-rendering="crispEdges"/></svg>
<!-- horizontal scrollbar -->
<div class="a" style="left:300px;top:530px;width:1055px;height:17px;background:#f0f0f0"></div>
<div class="a" style="left:324px;top:531px;width:743px;height:15px;border:1px solid #a6a6a6;border-radius:2px;background:linear-gradient(#f6f6f6,#dddddd 50%,#cfcfcf)"></div>
<svg style="left:300px;top:530px" width="1072" height="17"><path d="M9,4.500l-4,3.500l4,3.500zM1044.500,4.500l4,3.500l-4,3.500z" fill="#505050"/><path d="M391.500,5v7M393.500,5v7M395.500,5v7M397.500,5v7" stroke="#5a5a5a" stroke-width="1" shape-rendering="crispEdges"/></svg>
<div class="a" style="left:1355px;top:530px;width:17px;height:17px;background:#f0f0f0"></div>
<!-- TABLE MANAGER -->
<div class="a" style="left:299px;top:552px;width:1076px;height:209px;background:#e6e6e6;border-radius:3px 3px 0 0"></div>
<div class="a" style="left:299px;top:552px;width:1076px;height:26px;border-radius:3px 3px 0 0;background:linear-gradient(#a2a2a2 0,#8d8d8d 2px,#858585 50%,#8a8a8a 51%,#9c9c9c 100%)"></div>
<div class="t" style="left:306px;top:559px;font-size:11px;color:#e8e8e8">Table Manager</div>
<svg style="left:1357px;top:560px" width="10" height="12" shape-rendering="crispEdges"><path d="M2.500,1.500h4v5h-4zM1,6.500h8M4.500,7v4" stroke="#cecece" stroke-width="1" fill="none"/><path d="M5.500,2v4" stroke="#cecece" stroke-width="1"/></svg>
<div class="a" style="left:299px;top:752px;width:1076px;height:9px;background:linear-gradient(#f4f4f4 0,#f4f4f4 3px,#dedede 3px,#dedede 5px,#c2c2c2 5px,#b4b4b4 7px,#e8e8e8 7px,#e8e8e8 9px)"></div>
<div class="a" style="left:304px;top:582px;width:83px;height:19px;border-radius:3px 3px 0 0;border:1px solid #555;border-bottom:none;background:linear-gradient(#5e5e5e,#7c7c7c 60%,#8c8c8c)"></div>
<div class="a" style="left:388px;top:582px;width:82px;height:19px;border-radius:3px 3px 0 0;border:1px solid #555;border-bottom:none;background:linear-gradient(#5e5e5e,#7c7c7c 60%,#8c8c8c)"></div>
<div class="a" style="left:471px;top:581px;width:116px;height:21px;border-radius:3px 3px 0 0;border:1px solid #8c8c8c;border-bottom:none;background:linear-gradient(#fbfbfb,#ececec)"></div>
<div class="t" style="left:312px;top:585px;font-size:11px;color:#fff;letter-spacing:-.2px">Bill of Material</div>
<div class="t" style="left:396px;top:585px;font-size:11px;color:#fff;letter-spacing:-.3px">Specifications</div>
<div class="t" style="left:479.500px;top:585px;font-size:11px;color:#111;letter-spacing:-.2px">Bill of Characteristics</div>
<div class="a" style="left:303px;top:601px;width:1068px;height:152px;background:#ededed;border:1px solid #9e9e9e;border-right-color:#d0d0d0;border-bottom-color:#fafafa"></div>
<div class="a" style="left:304px;top:602px;width:1063px;height:150px;background:#4a4a4a"></div>
<div class="a" style="left:305px;top:603px;width:1045px;height:132px;background:#fff;overflow:hidden">
<div class="a" style="left:0;top:0;width:1045px;height:23px;background:linear-gradient(#ffffff,#f3f3f3 50%,#e4e4e4);border-bottom:1px solid #b0b0b0"></div>
<div class="a" style="left:0;top:22px;width:16px;height:110px;background:linear-gradient(90deg,#f4f4f4,#dedede)"></div>
<div class="a" style="left:91px;top:106px;width:954px;height:21px;background:#7b96df"></div>
<div class="a" style="left:15.5px;top:0;width:1px;height:132px;background:#d0d7e5;opacity:.85"></div>
<div class="a" style="left:15.5px;top:0;width:1px;height:22px;background:#b4b4b4"></div>
<div class="t" style="left:20.5px;top:5px;font-size:11px;color:#1a1a1a;letter-spacing:-.25px">Char #</div>
<div class="a" style="left:90px;top:0;width:1px;height:132px;background:#d0d7e5;opacity:.85"></div>
<div class="a" style="left:90px;top:0;width:1px;height:22px;background:#b4b4b4"></div>
<div class="t" style="left:95px;top:5px;font-size:11px;color:#1a1a1a;letter-spacing:-.25px">Location</div>
<div class="a" style="left:165px;top:0;width:1px;height:132px;background:#d0d7e5;opacity:.85"></div>
<div class="a" style="left:165px;top:0;width:1px;height:22px;background:#b4b4b4"></div>
<div class="t" style="left:170px;top:5px;font-size:11px;color:#1a1a1a;letter-spacing:-.25px">Qty</div>
<div class="a" style="left:240px;top:0;width:1px;height:132px;background:#d0d7e5;opacity:.85"></div>
<div class="a" style="left:240px;top:0;width:1px;height:22px;background:#b4b4b4"></div>
<div class="t" style="left:245px;top:5px;font-size:11px;color:#1a1a1a;letter-spacing:-.25px">Type</div>
<div class="a" style="left:315px;top:0;width:1px;height:132px;background:#d0d7e5;opacity:.85"></div>
<div class="a" style="left:315px;top:0;width:1px;height:22px;background:#b4b4b4"></div>
<div class="t" style="left:320px;top:5px;font-size:11px;color:#1a1a1a;letter-spacing:-.25px">Sub Type</div>
<div class="a" style="left:390px;top:0;width:1px;height:132px;background:#d0d7e5;opacity:.85"></div>
<div class="a" style="left:390px;top:0;width:1px;height:22px;background:#b4b4b4"></div>
<div class="t" style="left:395px;top:5px;font-size:11px;color:#1a1a1a;letter-spacing:-.25px">Units</div>
<div class="a" style="left:465px;top:0;width:1px;height:132px;background:#d0d7e5;opacity:.85"></div>
<div class="a" style="left:465px;top:0;width:1px;height:22px;background:#b4b4b4"></div>
<div class="t" style="left:470px;top:5px;font-size:11px;color:#1a1a1a;letter-spacing:-.25px">Value</div>
<div class="a" style="left:540px;top:0;width:1px;height:132px;background:#d0d7e5;opacity:.85"></div>
<div class="a" style="left:540px;top:0;width:1px;height:22px;background:#b4b4b4"></div>
<div class="t" style="left:545px;top:5px;font-size:11px;color:#1a1a1a;letter-spacing:-.25px">+ Tolerance</div>
<div class="a" style="left:615px;top:0;width:1px;height:132px;background:#d0d7e5;opacity:.85"></div>
<div class="a" style="left:615px;top:0;width:1px;height:22px;background:#b4b4b4"></div>
<div class="t" style="left:620px;top:5px;font-size:11px;color:#1a1a1a;letter-spacing:-.25px">- Tolerance</div>
<div class="a" style="left:690px;top:0;width:1px;height:132px;background:#d0d7e5;opacity:.85"></div>
<div class="a" style="left:690px;top:0;width:1px;height:22px;background:#b4b4b4"></div>
<div class="t" style="left:695px;top:5px;font-size:11px;color:#1a1a1a;letter-spacing:-.25px">Upper Limit</div>
<div class="a" style="left:765px;top:0;width:1px;height:132px;background:#d0d7e5;opacity:.85"></div>
<div class="a" style="left:765px;top:0;width:1px;height:22px;background:#b4b4b4"></div>
<div class="t" style="left:770px;top:5px;font-size:11px;color:#1a1a1a;letter-spacing:-.25px">Lower Limit</div>
<div class="a" style="left:840px;top:0;width:1px;height:132px;background:#d0d7e5;opacity:.85"></div>
<div class="a" style="left:840px;top:0;width:1px;height:22px;background:#b4b4b4"></div>
<div class="t" style="left:845px;top:5px;font-size:11px;color:#1a1a1a;letter-spacing:-.25px">Inspection ...</div>
<div class="a" style="left:915px;top:0;width:1px;height:132px;background:#d0d7e5;opacity:.85"></div>
<div class="a" style="left:915px;top:0;width:1px;height:22px;background:#b4b4b4"></div>
<div class="t" style="left:920px;top:5px;font-size:11px;color:#1a1a1a;letter-spacing:-.25px">Comments</div>
<div class="a" style="left:990px;top:0;width:1px;height:132px;background:#d0d7e5;opacity:.85"></div>
<div class="a" style="left:990px;top:0;width:1px;height:22px;background:#b4b4b4"></div>
<div class="t" style="left:995px;top:5px;font-size:11px;color:#1a1a1a;letter-spacing:-.25px">Process</div>
<div class="a" style="left:0;top:42.5px;width:1045px;height:1px;background:#d0d7e5"></div>
<div class="t" style="left:19px;top:26px;font-size:11px;letter-spacing:-.2px;color:#000">4</div>
<div class="t" style="left:93.5px;top:26px;font-size:11px;letter-spacing:-.2px;color:#000">3.F</div>
<div class="t" style="left:168.5px;top:26px;font-size:11px;letter-spacing:-.2px;color:#000">1</div>
<div class="t" style="left:243.5px;top:26px;font-size:11px;letter-spacing:-.75px;color:#000">DIMENSION</div>
<div class="t" style="left:318.5px;top:26px;font-size:11px;letter-spacing:-.75px;color:#000">ANGULAR</div>
<div class="t" style="left:393.5px;top:26px;font-size:11px;letter-spacing:-.2px;color:#000">deg</div>
<div class="t" style="left:469.5px;top:28px;font-family:'Liberation Mono',monospace;font-weight:bold;font-size:10px;letter-spacing:-.55px;color:#000">48.56°</div>
<div class="t" style="left:543.5px;top:26px;font-size:11px;letter-spacing:-.2px;color:#000">+1</div>
<div class="t" style="left:618.5px;top:26px;font-size:11px;letter-spacing:-.2px;color:#000">-1</div>
<div class="t" style="left:693.5px;top:26px;font-size:11px;letter-spacing:-.2px;color:#000">49.56</div>
<div class="t" style="left:768.5px;top:26px;font-size:11px;letter-spacing:-.2px;color:#000">47.56</div>
<div class="a" style="left:0;top:63.5px;width:1045px;height:1px;background:#d0d7e5"></div>
<div class="t" style="left:19px;top:47px;font-size:11px;letter-spacing:-.2px;color:#000">5</div>
<div class="t" style="left:93.5px;top:47px;font-size:11px;letter-spacing:-.2px;color:#000">2.F</div>
<div class="t" style="left:168.5px;top:47px;font-size:11px;letter-spacing:-.2px;color:#000">1</div>
<div class="t" style="left:243.5px;top:47px;font-size:11px;letter-spacing:-.75px;color:#000">DIMENSION</div>
<div class="t" style="left:318.5px;top:47px;font-size:11px;letter-spacing:-.75px;color:#000">LINEAR</div>
<div class="t" style="left:393.5px;top:47px;font-size:11px;letter-spacing:-.2px;color:#000">in</div>
<div class="t" style="left:543.5px;top:47px;font-size:11px;letter-spacing:-.2px;color:#000">+.020</div>
<div class="t" style="left:618.5px;top:47px;font-size:11px;letter-spacing:-.2px;color:#000">-2.875</div>
<div class="a" style="left:0;top:84.5px;width:1045px;height:1px;background:#d0d7e5"></div>
<div class="t" style="left:19px;top:68px;font-size:11px;letter-spacing:-.2px;color:#000">6</div>
<div class="t" style="left:93.5px;top:68px;font-size:11px;letter-spacing:-.2px;color:#000">2.F</div>
<div class="t" style="left:168.5px;top:68px;font-size:11px;letter-spacing:-.2px;color:#000">1</div>
<div class="t" style="left:243.5px;top:68px;font-size:11px;letter-spacing:-.75px;color:#000">DIMENSION</div>
<div class="t" style="left:318.5px;top:68px;font-size:11px;letter-spacing:-.75px;color:#000">LINEAR</div>
<div class="t" style="left:393.5px;top:68px;font-size:11px;letter-spacing:-.2px;color:#000">in</div>
<div class="t" style="left:469.5px;top:70px;font-family:'Liberation Mono',monospace;font-weight:bold;font-size:10px;letter-spacing:-.55px;color:#000">3.206</div>
<div class="t" style="left:543.5px;top:68px;font-size:11px;letter-spacing:-.2px;color:#000">+.003</div>
<div class="t" style="left:618.5px;top:68px;font-size:11px;letter-spacing:-.2px;color:#000">-.003</div>
<div class="t" style="left:693.5px;top:68px;font-size:11px;letter-spacing:-.2px;color:#000">3.209</div>
<div class="t" style="left:768.5px;top:68px;font-size:11px;letter-spacing:-.2px;color:#000">3.203</div>
<div class="a" style="left:0;top:105.5px;width:1045px;height:1px;background:#d0d7e5"></div>
<div class="t" style="left:19px;top:89px;font-size:11px;letter-spacing:-.2px;color:#000">7</div>
<div class="t" style="left:93.5px;top:89px;font-size:11px;letter-spacing:-.2px;color:#000">2.F</div>
<div class="t" style="left:168.5px;top:89px;font-size:11px;letter-spacing:-.2px;color:#000">1</div>
<div class="t" style="left:243.5px;top:89px;font-size:11px;letter-spacing:-.75px;color:#000">DIMENSION</div>
<div class="t" style="left:318.5px;top:89px;font-size:11px;letter-spacing:-.75px;color:#000">LINEAR</div>
<div class="t" style="left:393.5px;top:89px;font-size:11px;letter-spacing:-.2px;color:#000">in</div>
<div class="t" style="left:469.5px;top:91px;font-family:'Liberation Mono',monospace;font-weight:bold;font-size:10px;letter-spacing:-.55px;color:#000">3.503 / 3.…</div>
<div class="t" style="left:693.5px;top:89px;font-size:11px;letter-spacing:-.2px;color:#000">3.503</div>
<div class="t" style="left:768.5px;top:89px;font-size:11px;letter-spacing:-.2px;color:#000">3.496</div>
<div class="a" style="left:0;top:126.5px;width:1045px;height:1px;background:#d0d7e5"></div>
<div class="t" style="left:19px;top:110px;font-size:11px;letter-spacing:-.2px;color:#000">8</div>
<div class="t" style="left:93.5px;top:110px;font-size:11px;letter-spacing:-.2px;color:#fff">3.F</div>
<div class="t" style="left:168.5px;top:110px;font-size:11px;letter-spacing:-.2px;color:#fff">1</div>
<div class="t" style="left:243.5px;top:110px;font-size:11px;letter-spacing:-.45px;color:#fff">GEOMETRI...</div>
<div class="t" style="left:318.5px;top:110px;font-size:11px;letter-spacing:-.45px;color:#fff">PROFILE O...</div>
<div class="t" style="left:393.5px;top:110px;font-size:11px;letter-spacing:-.2px;color:#fff">in</div>
<div class="t" style="left:469.5px;top:112px;font-family:'Liberation Mono',monospace;font-weight:bold;font-size:10px;letter-spacing:-.55px;color:#fff">.020 / .000</div>
<div class="t" style="left:693.5px;top:110px;font-size:11px;letter-spacing:-.2px;color:#fff">.020</div>
<div class="t" style="left:768.5px;top:110px;font-size:11px;letter-spacing:-.2px;color:#fff">.000</div>
</div>
<svg style="left:309px;top:715px" width="8" height="12"><path d="M1.500,1.500l3.500,3.500l-3.500,3.500" fill="none" stroke="#222" stroke-width="1.700"/></svg>
<div class="a" style="left:1350px;top:603px;width:17px;height:132px;background:#4a4a4a"></div>
<div class="a" style="left:1351px;top:648px;width:15px;height:42px;border:1px solid #8a8a8a;background:linear-gradient(90deg,#f6f6f6,#dcdcdc 50%,#c4c4c4)"></div>
<svg style="left:1350px;top:603px" width="17" height="132"><path d="M3.500,11.500l5,-5l5,5zM3.500,121l5,5l5,-5z" fill="#e2e2e2"/><path d="M5,62.500h7M5,64.500h7M5,66.500h7M5,68.500h7" stroke="#666" stroke-width="1"/></svg>
<div class="a" style="left:305px;top:735px;width:1045px;height:17px;background:#484848"></div>
<div class="a" style="left:322px;top:736px;width:445px;height:15px;border:1px solid #8a8a8a;background:linear-gradient(#f4f4f4,#d8d8d8 50%,#bcbcbc)"></div>
<svg style="left:305px;top:735px" width="1045" height="17"><path d="M11.500,3.500l-5,5l5,5zM1034,3.500l5,5l-5,5z" fill="#e2e2e2"/><path d="M236.500,5v7M238.500,5v7M240.500,5v7M242.500,5v7" stroke="#666" stroke-width="1"/></svg>
<div class="a" style="left:1350px;top:735px;width:17px;height:17px;background:#e8e8e8"></div>
<!-- STATUS BAR -->
<div class="a" style="left:0;top:759px;width:1380px;height:2px;background:linear-gradient(#f2f2f2 0,#f2f2f2 1px,#2a2c30 1px)"></div>
<div class="a" style="left:0;top:761px;width:1380px;height:24px;background:linear-gradient(#2a2c30 0,#2a2c30 1px,#5a5d66 1px,#494c53 9px,#2a2b2f 9px,#33353a 19px,#3d3f45 22px,#4e5158 24px)"></div>
<div class="a" style="left:1166px;top:762px;width:210px;height:22px;border-radius:0 0 4px 0;background:linear-gradient(#848484 0,#767676 45%,#646464 50%,#5a5a5a 100%);border-left:1px solid #969696"></div>
<div class="t" style="left:1172px;top:766px;font-size:11px;color:#e8f0fa;letter-spacing:.4px">87.5 %</div>
<svg style="left:1166px;top:761px" width="214" height="24">
 <defs>
  <linearGradient id="sbtn" x1="0" y1="0" x2="0" y2="1"><stop offset="0" stop-color="#fafafa"/><stop offset=".5" stop-color="#dcdcdc"/><stop offset="1" stop-color="#b8b8b8"/></linearGradient>
  <linearGradient id="thumbg" x1="0" y1="0" x2="0" y2="1"><stop offset="0" stop-color="#fdf0c0"/><stop offset=".35" stop-color="#fbd873"/><stop offset=".4" stop-color="#f8bb2c"/><stop offset="1" stop-color="#f6a400"/></linearGradient>
 </defs>
 <!-- track -->
 <path d="M64,11.700H105" stroke="#f7c860" stroke-width="3" opacity=".45"/>
 <path d="M64,11.700H105" stroke="#f9cf6a" stroke-width="1.300"/>
 <path d="M115,11.700H177" stroke="#f2f2f2" stroke-width="1"/>
 <path d="M120,5V17" stroke="#f2f2f2" stroke-width="1"/>
 <!-- thumb -->
 <path d="M104.500,4.500H114.500V16.500L109.500,21.500L104.500,16.500Z" fill="url(#thumbg)" stroke="#d68a00" stroke-width=".8"/>
 <!-- minus / plus -->
 <circle cx="55" cy="11.700" r="6.800" fill="url(#sbtn)" stroke="#8a8a8a" stroke-width=".8"/>
 <path d="M51.500,11.700h7" stroke="#444" stroke-width="1.800"/>
 <circle cx="184.800" cy="11.700" r="6.800" fill="url(#sbtn)" stroke="#8a8a8a" stroke-width=".8"/>
 <path d="M181.300,11.700h7M184.800,8.200v7" stroke="#444" stroke-width="1.800"/>
 <!-- grip -->
 <g fill="#1e1e1e"><rect x="206" y="8" width="2" height="2"/><rect x="202" y="12" width="2" height="2"/><rect x="206" y="12" width="2" height="2"/><rect x="198" y="16" width="2" height="2"/><rect x="202" y="16" width="2" height="2"/><rect x="206" y="16" width="2" height="2"/></g>
 <g fill="#e8e8e8"><rect x="207" y="9" width="1" height="1"/><rect x="203" y="13" width="1" height="1"/><rect x="207" y="13" width="1" height="1"/><rect x="199" y="17" width="1" height="1"/><rect x="203" y="17" width="1" height="1"/><rect x="207" y="17" width="1" height="1"/></g>
</svg>
<svg style="left:0;top:777px" width="1380" height="8"><path d="M0,8V1Q1,7 7,8Z" fill="#000"/><path d="M1380,8V1Q1379,7 1373,8Z" fill="#000"/></svg>
</div>
</body>
</html>
